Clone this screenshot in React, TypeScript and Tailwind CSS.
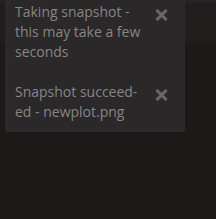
import React from "react";

function CloseX() {
  return (
    <svg width="13" height="12" viewBox="0 0 13 12" className="block">
      <path d="M1.5 1 L11.5 11 M11.5 1 L1.5 11" stroke="#6a6868" strokeWidth="3" fill="none" />
    </svg>
  );
}

function Note({ lines }: { lines: string[] }) {
  return (
    <div className="flex justify-between p-[10px]">
      <div className="text-[14px] leading-[20px] text-[#878585] whitespace-nowrap">
        {lines.map((l, i) => (
          <div key={i}>{l}</div>
        ))}
      </div>
      <div className="mt-[7px] mr-[7px]">
        <CloseX />
      </div>
    </div>
  );
}

export default function App() {
  return (
    <div
      className="relative w-[216px] h-[219px] overflow-hidden bg-[#1c1918]"
      style={{ fontFamily: '"Open Sans", "Liberation Sans", sans-serif' }}
    >
      <div className="h-[3px] bg-[#252223]" />
      <div className="h-[40px] bg-[#201d1c]" />
      <div className="absolute left-[5px] top-[-8px] w-[180px] flex flex-col">
        <div className="bg-[#2a2829]">
          <Note lines={["Taking snapshot -", "this may take a few", "seconds"]} />
        </div>
        <div className="bg-[#2a2829] rounded-b-[2px]">
          <Note lines={["Snapshot succeed-", "ed - newplot.png"]} />
        </div>
      </div>
    </div>
  );
}
